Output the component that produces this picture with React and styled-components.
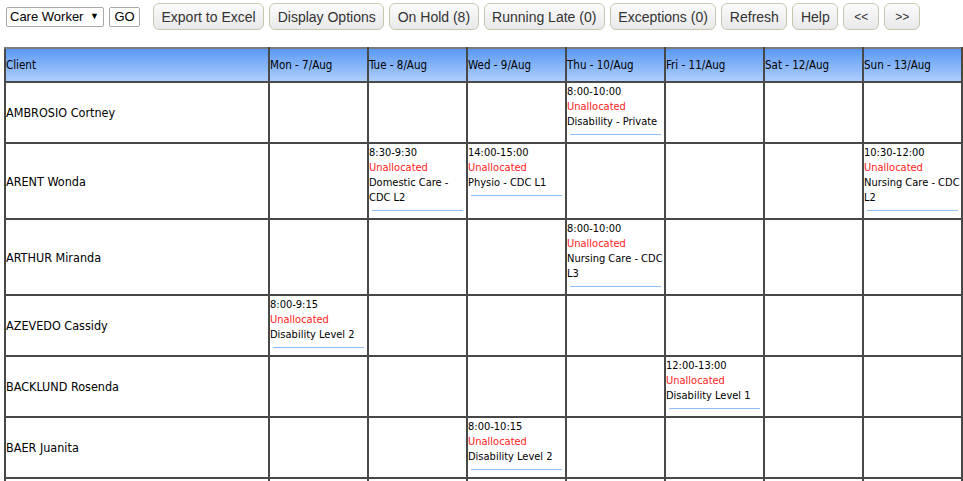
import React from "react";
import styled, { createGlobalStyle } from "styled-components";

const GlobalStyle = createGlobalStyle`
  html, body {
    margin: 0;
    padding: 0;
    background: #ffffff;
  }
`;

const Page = styled.div`
  width: 963px;
  height: 481px;
  overflow: hidden;
  font-family: "Liberation Sans", Arial, sans-serif;
`;

const Toolbar = styled.div`
  display: flex;
  align-items: center;
  height: 31px;
  padding: 1px 0 0 6px;
  margin-bottom: 15px;
  white-space: nowrap;
`;

const SelectBox = styled.div`
  display: flex;
  flex-shrink: 0;
  align-items: center;
  justify-content: space-between;
  width: 89px;
  height: 18px;
  border: 1px solid #a9a9a9;
  border-radius: 2px;
  padding: 0 4px 0 3px;
  font-size: 13px;
  color: #000;
  margin-right: 5px;
`;

const Arrow = styled.span`
  font-size: 9px;
  line-height: 1;
`;

const GoButton = styled.button`
  flex-shrink: 0;
  height: 20px;
  width: 31px;
  padding: 0;
  border: 1px solid #a9a9a9;
  border-radius: 2px;
  background: #fff;
  font-family: "Liberation Sans", Arial, sans-serif;
  font-size: 13px;
  color: #000;
  margin-right: 13px;
`;

const ActionGroup = styled.div`
  display: flex;
  flex-shrink: 0;
  gap: 5px;
`;

const ActionButton = styled.button`
  flex-shrink: 0;
  height: 27px;
  padding: 0 ${({ $narrow }) => ($narrow ? "0" : "7.5px")};
  width: ${({ $narrow }) => ($narrow ? "36px" : "auto")};
  border: 1px solid #c9c6ae;
  border-radius: 6px;
  background: linear-gradient(#fbfbfb, #e9e9e9);
  font-family: "Liberation Sans", Arial, sans-serif;
  font-size: ${({ $narrow }) => ($narrow ? "12px" : "14px")};
  color: #333;
  white-space: nowrap;
  cursor: pointer;
`;

const Grid = styled.table`
  margin-left: 4px;
  width: 958px;
  table-layout: fixed;
  border-collapse: collapse;
  font-family: Tahoma, "DejaVu Sans Condensed", "DejaVu Sans", sans-serif;
  font-stretch: condensed;
  color: #000;
`;

const HeadCell = styled.th`
  height: 32px;
  padding: 0;
  border: 2px solid #484848;
  border-top-color: #7a7a7a;
  background: linear-gradient(#5a99f4, #aecefc);
  text-align: left;
  vertical-align: middle;
  font-weight: normal;
  font-size: 11.5px;
`;

const ClientCell = styled.td`
  border: 2px solid #484848;
  padding: 0;
  vertical-align: middle;
  font-size: 12.5px;
`;

const DayCell = styled.td`
  border: 2px solid #484848;
  padding: 0;
  vertical-align: top;
  height: 59px;
  font-size: 11px;
`;

const Visit = styled.div`
  padding-top: 1px;
  line-height: 15px;
`;

const Status = styled.div`
  color: #ff1a1a;
`;

const Divider = styled.div`
  margin: 5px 3px 7px 3px;
  border-top: 1px solid #8cbff7;
`;

const days = [
  "Mon - 7/Aug",
  "Tue - 8/Aug",
  "Wed - 9/Aug",
  "Thu - 10/Aug",
  "Fri - 11/Aug",
  "Sat - 12/Aug",
  "Sun - 13/Aug",
];

const rows = [
  {
    client: "AMBROSIO Cortney",
    visits: { 3: { time: "8:00-10:00", service: "Disability - Private" } },
  },
  {
    client: "ARENT Wonda",
    visits: {
      1: { time: "8:30-9:30", service: "Domestic Care - CDC L2" },
      2: { time: "14:00-15:00", service: "Physio - CDC L1" },
      6: { time: "10:30-12:00", service: "Nursing Care - CDC L2" },
    },
  },
  {
    client: "ARTHUR Miranda",
    visits: { 3: { time: "8:00-10:00", service: "Nursing Care - CDC L3" } },
  },
  {
    client: "AZEVEDO Cassidy",
    visits: { 0: { time: "8:00-9:15", service: "Disability Level 2" } },
  },
  {
    client: "BACKLUND Rosenda",
    visits: { 4: { time: "12:00-13:00", service: "Disability Level 1" } },
  },
  {
    client: "BAER Juanita",
    visits: { 2: { time: "8:00-10:15", service: "Disability Level 2" } },
  },
  { client: "BAILEY Marcus", visits: {} },
];

const buttons = [
  "Export to Excel",
  "Display Options",
  "On Hold (8)",
  "Running Late (0)",
  "Exceptions (0)",
  "Refresh",
  "Help",
];

const App = () => {
  return (
    <Page>
      <GlobalStyle />
      <Toolbar>
        <SelectBox>
          Care Worker
          <Arrow>▼</Arrow>
        </SelectBox>
        <GoButton>GO</GoButton>
        <ActionGroup>
          {buttons.map((label) => (
            <ActionButton key={label}>{label}</ActionButton>
          ))}
          <ActionButton $narrow>&lt;&lt;</ActionButton>
          <ActionButton $narrow>&gt;&gt;</ActionButton>
        </ActionGroup>
      </Toolbar>
      <Grid>
        <colgroup>
          <col style={{ width: 264 }} />
          {days.map((d) => (
            <col key={d} style={{ width: 99 }} />
          ))}
        </colgroup>
        <thead>
          <tr>
            <HeadCell>Client</HeadCell>
            {days.map((d) => (
              <HeadCell key={d}>{d}</HeadCell>
            ))}
          </tr>
        </thead>
        <tbody>
          {rows.map((row) => (
            <tr key={row.client}>
              <ClientCell>{row.client}</ClientCell>
              {days.map((d, i) => {
                const v = row.visits[i];
                return (
                  <DayCell key={d}>
                    {v && (
                      <Visit>
                        <div>{v.time}</div>
                        <Status>Unallocated</Status>
                        <div>{v.service}</div>
                        <Divider />
                      </Visit>
                    )}
                  </DayCell>
                );
              })}
            </tr>
          ))}
        </tbody>
      </Grid>
    </Page>
  );
};

export default App;
